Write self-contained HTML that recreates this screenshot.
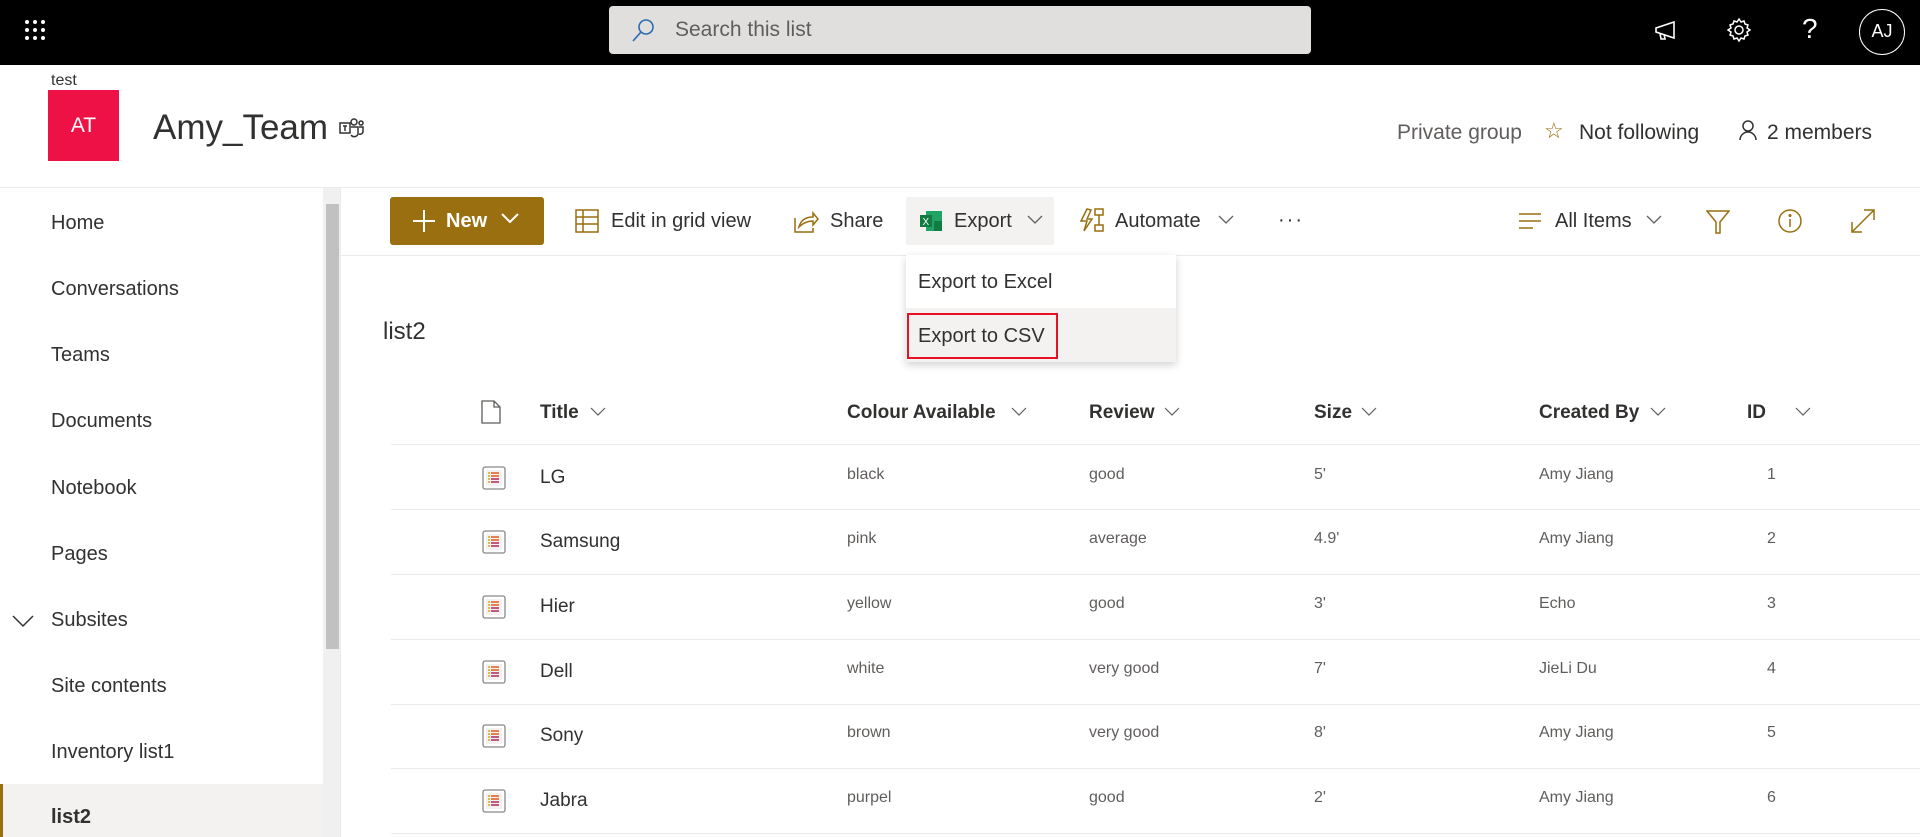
<!DOCTYPE html>
<html><head><meta charset="utf-8"><style>
*{margin:0;padding:0;box-sizing:border-box}
body{width:1920px;height:837px;overflow:hidden;background:#fff;font-family:"Liberation Sans",sans-serif;color:#323130;position:relative}
.a{position:absolute;white-space:nowrap}
.top{left:0;top:0;width:1920px;height:65px;background:#000}
.nav{font-size:20px;color:#323130}
.cmd{font-size:20px;color:#323130}
.th{font-size:19px;font-weight:bold;color:#323130}
.td{font-size:16px;color:#605e5c}
.tt{font-size:19px;color:#323130}
.sep{position:absolute;left:391px;width:1529px;height:1px;background:#edebe9}
</style></head><body>
<div class="a top"></div>
<svg class="a" style="left:24px;top:19px" width="22" height="22" viewBox="0 0 22 22" fill="#fff"><circle cx="3" cy="3" r="2"/><circle cx="11" cy="3" r="2"/><circle cx="19" cy="3" r="2"/><circle cx="3" cy="11" r="2"/><circle cx="11" cy="11" r="2"/><circle cx="19" cy="11" r="2"/><circle cx="3" cy="19" r="2"/><circle cx="11" cy="19" r="2"/><circle cx="19" cy="19" r="2"/></svg>
<div class="a" style="left:609px;top:6px;width:702px;height:48px;background:#e1dfdd;border-radius:4px"></div>
<svg class="a" style="left:630px;top:17px" width="26" height="26" viewBox="0 0 26 26" fill="none" stroke="#2b6cb0" stroke-width="1.6"><circle cx="16" cy="10" r="7"/><path d="M11 15L3 24"/></svg>
<div class="a" style="left:675px;top:18px;font-size:21px;color:#605e5c">Search this list</div>
<svg class="a" style="left:1652px;top:18px" width="28" height="26" viewBox="0 0 28 26" fill="none" stroke="#fff" stroke-width="1.6"><path d="M4 10L22 4V20L4 14Z M8 15L9 21H13L12 16"/></svg>
<svg class="a" style="left:1726px;top:17px" width="26" height="26" viewBox="0 0 26 26" fill="none" stroke="#fff" stroke-width="1.5"><circle cx="13" cy="13" r="4"/><path d="M13 2l2 3 3-1 1 3 3 1-1 3 3 2-3 2 1 3-3 1-1 3-3-1-2 3-2-3-3 1-1-3-3-1 1-3-3-2 3-2-1-3 3-1 1-3 3 1z"/></svg>
<div class="a" style="left:1802px;top:13px;font-size:28px;color:#fff">?</div>
<div class="a" style="left:1859px;top:9px;width:46px;height:46px;border:1.5px solid #fff;border-radius:50%;color:#fff;font-size:18px;text-align:center;line-height:43px">AJ</div>

<div class="a" style="left:51px;top:72px;font-size:16px;color:#323130">test</div>
<div class="a" style="left:48px;top:90px;width:71px;height:71px;background:#ed1145;color:#fff;font-size:21px;text-align:center;line-height:71px">AT</div>
<div class="a" style="left:153px;top:108px;font-size:35px;color:#323130">Amy_Team</div>
<svg class="a" style="left:338px;top:117px" width="28" height="24" viewBox="0 0 28 24" fill="none" stroke="#323130" stroke-width="1.5"><rect x="2" y="6" width="10" height="10"/><path d="M5 9h4M7 9v5"/><circle cx="16" cy="5" r="3"/><circle cx="23" cy="6" r="2"/><path d="M13 10h7v7a4 4 0 0 1-7 1M21 10h4v5a3 3 0 0 1-4 2"/></svg>
<div class="a" style="left:1397px;top:121px;font-size:21px;color:#605e5c">Private group</div>
<div class="a" style="left:1544px;top:118px;font-size:22px;color:#996f0f">☆</div>
<div class="a" style="left:1579px;top:121px;font-size:21px;color:#323130">Not following</div>
<svg class="a" style="left:1738px;top:119px" width="20" height="22" viewBox="0 0 20 22" fill="none" stroke="#323130" stroke-width="1.5"><circle cx="10" cy="7" r="5"/><path d="M2 21a8 8 0 0 1 16 0"/></svg>
<div class="a" style="left:1767px;top:121px;font-size:21px;color:#323130">2 members</div>
<div class="a" style="left:0;top:187px;width:1920px;height:1px;background:#edebe9"></div>

<div class="a" style="left:323px;top:188px;width:17px;height:649px;background:#f0f0f0"></div>
<div class="a" style="left:326px;top:204px;width:13px;height:445px;background:#c1c1c1"></div>
<div class="a" style="left:340px;top:188px;width:1px;height:649px;background:#edebe9"></div>
<div class="a" style="left:0;top:784px;width:323px;height:53px;background:#f3f2f1"></div>
<div class="a" style="left:0;top:784px;width:3px;height:53px;background:#996f0f"></div>
<div class="a nav" style="left:51px;top:212px">Home</div>
<div class="a nav" style="left:51px;top:278px">Conversations</div>
<div class="a nav" style="left:51px;top:344px">Teams</div>
<div class="a nav" style="left:51px;top:410px">Documents</div>
<div class="a nav" style="left:51px;top:477px">Notebook</div>
<div class="a nav" style="left:51px;top:543px">Pages</div>
<svg class="a" style="left:12px;top:614px" width="22" height="14" viewBox="0 0 22 14" fill="none" stroke="#323130" stroke-width="1.5"><path d="M1 2l10 10L21 2"/></svg>
<div class="a nav" style="left:51px;top:609px">Subsites</div>
<div class="a nav" style="left:51px;top:675px">Site contents</div>
<div class="a nav" style="left:51px;top:741px">Inventory list1</div>
<div class="a nav" style="left:51px;top:806px;font-weight:bold">list2</div>

<div class="a" style="left:390px;top:197px;width:154px;height:48px;background:#996f0f;border-radius:3px"></div>
<svg class="a" style="left:412px;top:209px" width="24" height="24" viewBox="0 0 24 24" stroke="#fff" stroke-width="2"><path d="M12 1v22M1 12h22"/></svg>
<div class="a" style="left:446px;top:210px;font-size:20px;font-weight:bold;color:#fff">New</div>
<svg class="a" style="left:500px;top:212px" width="20" height="14" viewBox="0 0 20 14" fill="none" stroke="#fff" stroke-width="2"><path d="M2 2l8 8 8-8"/></svg>
<svg class="a" style="left:575px;top:209px" width="24" height="24" viewBox="0 0 24 24" fill="none" stroke="#996f0f" stroke-width="1.5"><rect x="1" y="1" width="22" height="22"/><path d="M1 8h22M1 15h22M8 1v22"/></svg>
<div class="a cmd" style="left:611px;top:210px">Edit in grid view</div>
<svg class="a" style="left:793px;top:208px" width="26" height="26" viewBox="0 0 26 26" fill="none" stroke="#996f0f" stroke-width="1.5"><path d="M2 10v14h18v-4M6 19c2-8 8-10 14-10V5l5 6-5 6v-4c-6 0-10 2-14 6z"/></svg>
<div class="a cmd" style="left:830px;top:210px">Share</div>
<div class="a" style="left:906px;top:197px;width:148px;height:48px;background:#f3f2f1;border-radius:2px"></div>
<svg class="a" style="left:919px;top:210px" width="24" height="22" viewBox="0 0 24 22"><rect x="7" y="1" width="16" height="20" fill="#21a366"/><rect x="15" y="11" width="8" height="10" fill="#107c41"/><rect x="1" y="5" width="12" height="12" fill="#107c41"/><text x="3.5" y="15" font-size="10" fill="#fff" font-family="Liberation Sans">X</text></svg>
<div class="a cmd" style="left:954px;top:210px">Export</div>
<svg class="a" style="left:1027px;top:215px" width="16" height="10" viewBox="0 0 16 10" fill="none" stroke="#605e5c" stroke-width="1.3"><path d="M1 1l7 7 7-7"/></svg>
<svg class="a" style="left:1078px;top:207px" width="28" height="28" viewBox="0 0 28 28" fill="none" stroke="#996f0f" stroke-width="1.5"><path d="M9 2L3 14h6l-3 10 8-12H9l4-9z"/><rect x="17" y="2" width="8" height="6"/><rect x="17" y="18" width="8" height="6"/><path d="M21 8v10"/></svg>
<div class="a cmd" style="left:1115px;top:210px">Automate</div>
<svg class="a" style="left:1218px;top:215px" width="16" height="10" viewBox="0 0 16 10" fill="none" stroke="#605e5c" stroke-width="1.3"><path d="M1 1l7 7 7-7"/></svg>
<div class="a" style="left:1278px;top:209px;font-size:20px;color:#323130;letter-spacing:2px">···</div>
<svg class="a" style="left:1518px;top:211px" width="24" height="20" viewBox="0 0 24 20" stroke="#996f0f" stroke-width="1.5"><path d="M1 3h22M1 10h22M1 17h14"/></svg>
<div class="a cmd" style="left:1555px;top:210px">All Items</div>
<svg class="a" style="left:1646px;top:215px" width="16" height="10" viewBox="0 0 16 10" fill="none" stroke="#605e5c" stroke-width="1.3"><path d="M1 1l7 7 7-7"/></svg>
<svg class="a" style="left:1706px;top:209px" width="24" height="26" viewBox="0 0 24 26" fill="none" stroke="#996f0f" stroke-width="1.5"><path d="M1 2h22l-9 11v11h-4V13z"/></svg>
<svg class="a" style="left:1777px;top:208px" width="26" height="26" viewBox="0 0 26 26" fill="none" stroke="#996f0f" stroke-width="1.5"><circle cx="13" cy="13" r="11"/><path d="M13 11v8"/><circle cx="13" cy="7.5" r="0.8" fill="#996f0f"/></svg>
<svg class="a" style="left:1850px;top:208px" width="26" height="26" viewBox="0 0 26 26" fill="none" stroke="#996f0f" stroke-width="1.5"><path d="M2 24L24 2M14 2h10v10M2 14v10h10"/></svg>
<div class="a" style="left:341px;top:255px;width:1579px;height:1px;background:#edebe9"></div>

<div class="a" style="left:383px;top:318px;font-size:24px;color:#323130">list2</div>

<svg class="a" style="left:481px;top:400px" width="20" height="24" viewBox="0 0 20 24" fill="none" stroke="#605e5c" stroke-width="1.3"><path d="M1 1h12l6 6v16H1z M13 1v6h6"/></svg>
<div class="a th" style="left:540px;top:402px">Title</div>
<div class="a th" style="left:847px;top:402px">Colour Available</div>
<div class="a th" style="left:1089px;top:402px">Review</div>
<div class="a th" style="left:1314px;top:402px">Size</div>
<div class="a th" style="left:1539px;top:402px">Created By</div>
<div class="a th" style="left:1747px;top:402px">ID</div>
<svg class="a" style="left:590px;top:406px" width="1330" height="12"><g fill="none" stroke="#605e5c" stroke-width="1.2"><path d="M1 2l7 7 7-7"/><path d="M422 2l7 7 7-7"/><path d="M575 2l7 7 7-7"/><path d="M772 2l7 7 7-7"/><path d="M1061 2l7 7 7-7"/><path d="M1206 2l7 7 7-7"/></g></svg>

<div class="sep" style="top:444px"></div>
<div class="sep" style="top:509px"></div>
<div class="sep" style="top:574px"></div>
<div class="sep" style="top:639px"></div>
<div class="sep" style="top:704px"></div>
<div class="sep" style="top:768px"></div>
<div class="sep" style="top:833px"></div>

<svg width="0" height="0" style="position:absolute"><defs><g id="li"><rect x="1" y="1" width="22" height="22" rx="2" fill="#fff" stroke="#8a8886" stroke-width="1.3"/><rect x="4" y="4" width="16" height="16" fill="#f3f2f1"/><path d="M6 7h2M6 10h2M6 13h2M6 16h2" stroke="#e8a317" stroke-width="1.6"/><path d="M9 7h8M9 10h8" stroke="#e25a1c" stroke-width="1.6"/><path d="M9 13h8M9 16h8" stroke="#b0245a" stroke-width="1.6"/></g></defs></svg>

<svg class="a" style="left:482px;top:466px" width="24" height="24"><use href="#li"/></svg>
<div class="a tt" style="left:540px;top:467px">LG</div><div class="a td" style="left:847px;top:466px">black</div><div class="a td" style="left:1089px;top:466px">good</div><div class="a td" style="left:1314px;top:466px">5'</div><div class="a td" style="left:1539px;top:466px">Amy Jiang</div><div class="a td" style="left:1767px;top:466px">1</div>

<svg class="a" style="left:482px;top:530px" width="24" height="24"><use href="#li"/></svg>
<div class="a tt" style="left:540px;top:531px">Samsung</div><div class="a td" style="left:847px;top:530px">pink</div><div class="a td" style="left:1089px;top:530px">average</div><div class="a td" style="left:1314px;top:530px">4.9'</div><div class="a td" style="left:1539px;top:530px">Amy Jiang</div><div class="a td" style="left:1767px;top:530px">2</div>

<svg class="a" style="left:482px;top:595px" width="24" height="24"><use href="#li"/></svg>
<div class="a tt" style="left:540px;top:596px">Hier</div><div class="a td" style="left:847px;top:595px">yellow</div><div class="a td" style="left:1089px;top:595px">good</div><div class="a td" style="left:1314px;top:595px">3'</div><div class="a td" style="left:1539px;top:595px">Echo</div><div class="a td" style="left:1767px;top:595px">3</div>

<svg class="a" style="left:482px;top:660px" width="24" height="24"><use href="#li"/></svg>
<div class="a tt" style="left:540px;top:661px">Dell</div><div class="a td" style="left:847px;top:660px">white</div><div class="a td" style="left:1089px;top:660px">very good</div><div class="a td" style="left:1314px;top:660px">7'</div><div class="a td" style="left:1539px;top:660px">JieLi Du</div><div class="a td" style="left:1767px;top:660px">4</div>

<svg class="a" style="left:482px;top:724px" width="24" height="24"><use href="#li"/></svg>
<div class="a tt" style="left:540px;top:725px">Sony</div><div class="a td" style="left:847px;top:724px">brown</div><div class="a td" style="left:1089px;top:724px">very good</div><div class="a td" style="left:1314px;top:724px">8'</div><div class="a td" style="left:1539px;top:724px">Amy Jiang</div><div class="a td" style="left:1767px;top:724px">5</div>

<svg class="a" style="left:482px;top:789px" width="24" height="24"><use href="#li"/></svg>
<div class="a tt" style="left:540px;top:790px">Jabra</div><div class="a td" style="left:847px;top:789px">purpel</div><div class="a td" style="left:1089px;top:789px">good</div><div class="a td" style="left:1314px;top:789px">2'</div><div class="a td" style="left:1539px;top:789px">Amy Jiang</div><div class="a td" style="left:1767px;top:789px">6</div>

<div class="a" style="left:906px;top:255px;width:270px;height:107px;background:#fff;box-shadow:0 3px 8px rgba(0,0,0,0.18)"></div>
<div class="a" style="left:906px;top:308px;width:270px;height:54px;background:#f3f2f1"></div>
<div class="a" style="left:918px;top:271px;font-size:20px;color:#323130">Export to Excel</div>
<div class="a" style="left:918px;top:325px;font-size:20px;color:#323130">Export to CSV</div>
<div class="a" style="left:907px;top:313px;width:151px;height:46px;border:2px solid #e81123"></div>
</body></html>
